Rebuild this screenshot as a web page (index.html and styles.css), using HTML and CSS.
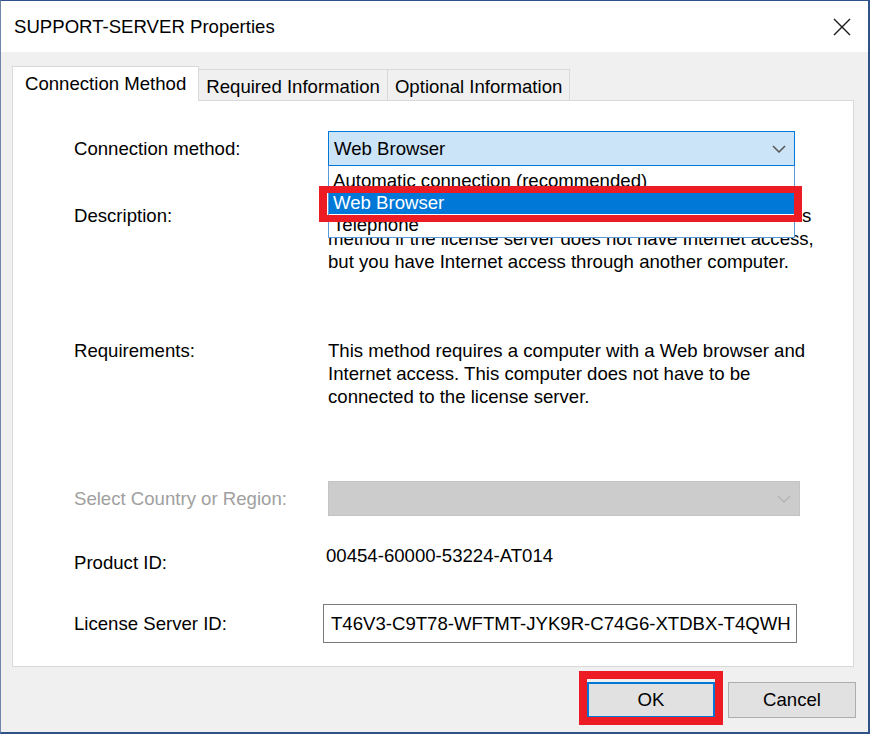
FILE: index.html
```html
<!DOCTYPE html>
<html lang="en">
<head>
    <meta charset="UTF-8">
    <meta name="viewport" content="width=device-width, initial-scale=1.0">
    <title>SUPPORT-SERVER Properties</title>
    <link rel="stylesheet" href="styles.css">
</head>
<body>
    <div class="window">
        <div class="titlebar">
            <span class="title">SUPPORT-SERVER Properties</span>
            <svg class="close" width="18" height="18" viewBox="0 0 18 18">
                <path d="M1 1L17 17M17 1L1 17" stroke="#1a1a1a" stroke-width="1.4" fill="none"/>
            </svg>
        </div>

        <div class="client">
            <div class="tabs">
                <div class="tab active">Connection Method</div>
                <div class="tab">Required Information</div>
                <div class="tab">Optional Information</div>
            </div>

            <div class="panel">
                <div class="row row-method">
                    <label class="label" for="method">Connection method:</label>
                    <div class="combo-wrap">
                        <div class="combo open" id="method">
                            <span>Web Browser</span>
                            <svg width="14" height="8" viewBox="0 0 14 8"><path d="M1 1L7 7L13 1" stroke="#555" stroke-width="1.5" fill="none"/></svg>
                        </div>
                        <ul class="droplist">
                            <li>Automatic connection (recommended)</li>
                            <li class="selected">Web Browser</li>
                            <li>Telephone</li>
                        </ul>
                        <div class="mark mark-item"></div>
                    </div>
                </div>

                <div class="row row-text row-desc">
                    <span class="label">Description:</span>
                    <p class="text">
                        Activate the license server through the Web page. Use this<br>
                        method if the license server does not have Internet access,<br>
                        but you have Internet access through another computer.
                    </p>
                </div>

                <div class="row row-text row-req">
                    <span class="label">Requirements:</span>
                    <p class="text">
                        This method requires a computer with a Web browser and<br>
                        Internet access. This computer does not have to be<br>
                        connected to the license server.
                    </p>
                </div>

                <div class="row row-country">
                    <span class="label disabled">Select Country or Region:</span>
                    <div class="combo combo-disabled">
                        <span></span>
                        <svg width="14" height="8" viewBox="0 0 14 8"><path d="M1 1L7 7L13 1" stroke="#b4b4b4" stroke-width="1.3" fill="none"/></svg>
                    </div>
                </div>

                <div class="row row-product">
                    <span class="label">Product ID:</span>
                    <span class="value">00454-60000-53224-AT014</span>
                </div>

                <div class="row row-server">
                    <label class="label" for="serverId">License Server ID:</label>
                    <input class="field" id="serverId" type="text" value="T46V3-C9T78-WFTMT-JYK9R-C74G6-XTDBX-T4QWH" readonly>
                </div>
            </div>

            <div class="buttons">
                <div class="ok-wrap">
                    <button class="btn btn-default" type="button">OK</button>
                    <span class="mark mark-ok"></span>
                </div>
                <button class="btn" type="button">Cancel</button>
            </div>
        </div>
    </div>
</body>
</html>
```

FILE: styles.css
```css
* {
    box-sizing: border-box;
}
body {
    margin: 0;
    font-family: "Liberation Sans", Arial, sans-serif;
    font-size: 18.6px;
    color: #000;
    background: #fff;
}
.window {
    width: 870px;
    height: 734px;
    display: flex;
    flex-direction: column;
    background-color: #f0f0f0;
    border: solid #2f5288;
    border-width: 1px 2px 2px 1px;
    border-left-color: #6f86aa;
}
.titlebar {
    height: 51px;
    flex: none;
    display: flex;
    align-items: center;
    justify-content: space-between;
    padding: 0 17px 0 13px;
    background-color: #fff;
}
.close {
    display: block;
}
.client {
    flex: 1;
    display: flex;
    flex-direction: column;
    padding: 14px 12px 0 11px;
}

/* tabs */
.tabs {
    height: 34px;
    display: flex;
    align-items: flex-end;
    position: relative;
    z-index: 1;
}
.tab {
    height: 31px;
    padding: 3px 7px 0;
    line-height: 27px;
    margin-left: -1px;
    border: 1px solid #d9d9d9;
    border-bottom: none;
    background-color: #f0f0f0;
}
.tab.active {
    height: 35px;
    margin: 0 0 -1px 0;
    padding: 0 12px;
    line-height: 33px;
    background-color: #fff;
}
.panel {
    height: 567px;
    margin-right: 2px;
    padding: 30px 0 0 61px;
    background-color: #fff;
    border: 1px solid #d9d9d9;
}

/* rows */
.row {
    display: flex;
    align-items: center;
}
.label {
    width: 254px;
    flex: none;
}
.label.disabled {
    color: #a0a0a0;
}
.row-text {
    align-items: flex-start;
    line-height: 23px;
}
.row-desc {
    margin-top: 38px;
}
.row-req {
    margin-top: 66px;
}
.row-country {
    margin-top: 73px;
}
.row-product {
    margin-top: 29px;
    align-items: flex-start;
    line-height: 22px;
}
.row-product .label {
    padding-top: 7px;
}
.row-product .value {
    margin-left: -2px;
}
.row-server {
    margin-top: 30px;
}
.text {
    margin: 0;
}

/* combo boxes */
.combo-wrap {
    position: relative;
    width: 467px;
}
.combo {
    height: 35px;
    display: flex;
    align-items: center;
    justify-content: space-between;
    padding: 0 8px 0 5px;
    border: 1px solid #0078d7;
    background-color: #cce4f7;
}
.combo-disabled {
    width: 472px;
    border-color: #c4c4c4;
    background-color: #cccccc;
}
.droplist {
    position: absolute;
    left: 0;
    top: 35px;
    width: 467px;
    height: 72px;
    margin: 0;
    padding: 4px 0 0;
    list-style: none;
    background-color: #fff;
    border: 1px solid #5a9ad8;
    border-top: none;
}
.droplist li {
    height: 22px;
    line-height: 22px;
    padding-left: 4px;
}
.droplist li.selected {
    background-color: #0078d7;
    color: #fff;
}

.field {
    width: 474px;
    height: 39px;
    margin-left: -5px;
    padding: 0 0 0 7px;
    font-family: inherit;
    font-size: 18.6px;
    color: #000;
    border: 1px solid #7a7a7a;
    background-color: #fff;
    outline: none;
}

/* buttons */
.buttons {
    display: flex;
    justify-content: flex-end;
    gap: 13px;
    margin-top: 15px;
}
.ok-wrap {
    position: relative;
}
.btn {
    display: block;
    width: 128px;
    height: 36px;
    padding: 0;
    font-family: inherit;
    font-size: 18.6px;
    color: #000;
    background-color: #e1e1e1;
    border: 1px solid #adadad;
}
.btn-default {
    border: 2px solid #0078d7;
}

/* red annotation boxes */
.mark {
    position: absolute;
    border: 8px solid #ed1c24;
    pointer-events: none;
}
.mark-item {
    left: -9px;
    top: 55px;
    width: 483px;
    height: 36px;
    border-width: 7px 8px;
}
.mark-ok {
    left: -8px;
    top: -11px;
    width: 144px;
    height: 54px;
}
```
